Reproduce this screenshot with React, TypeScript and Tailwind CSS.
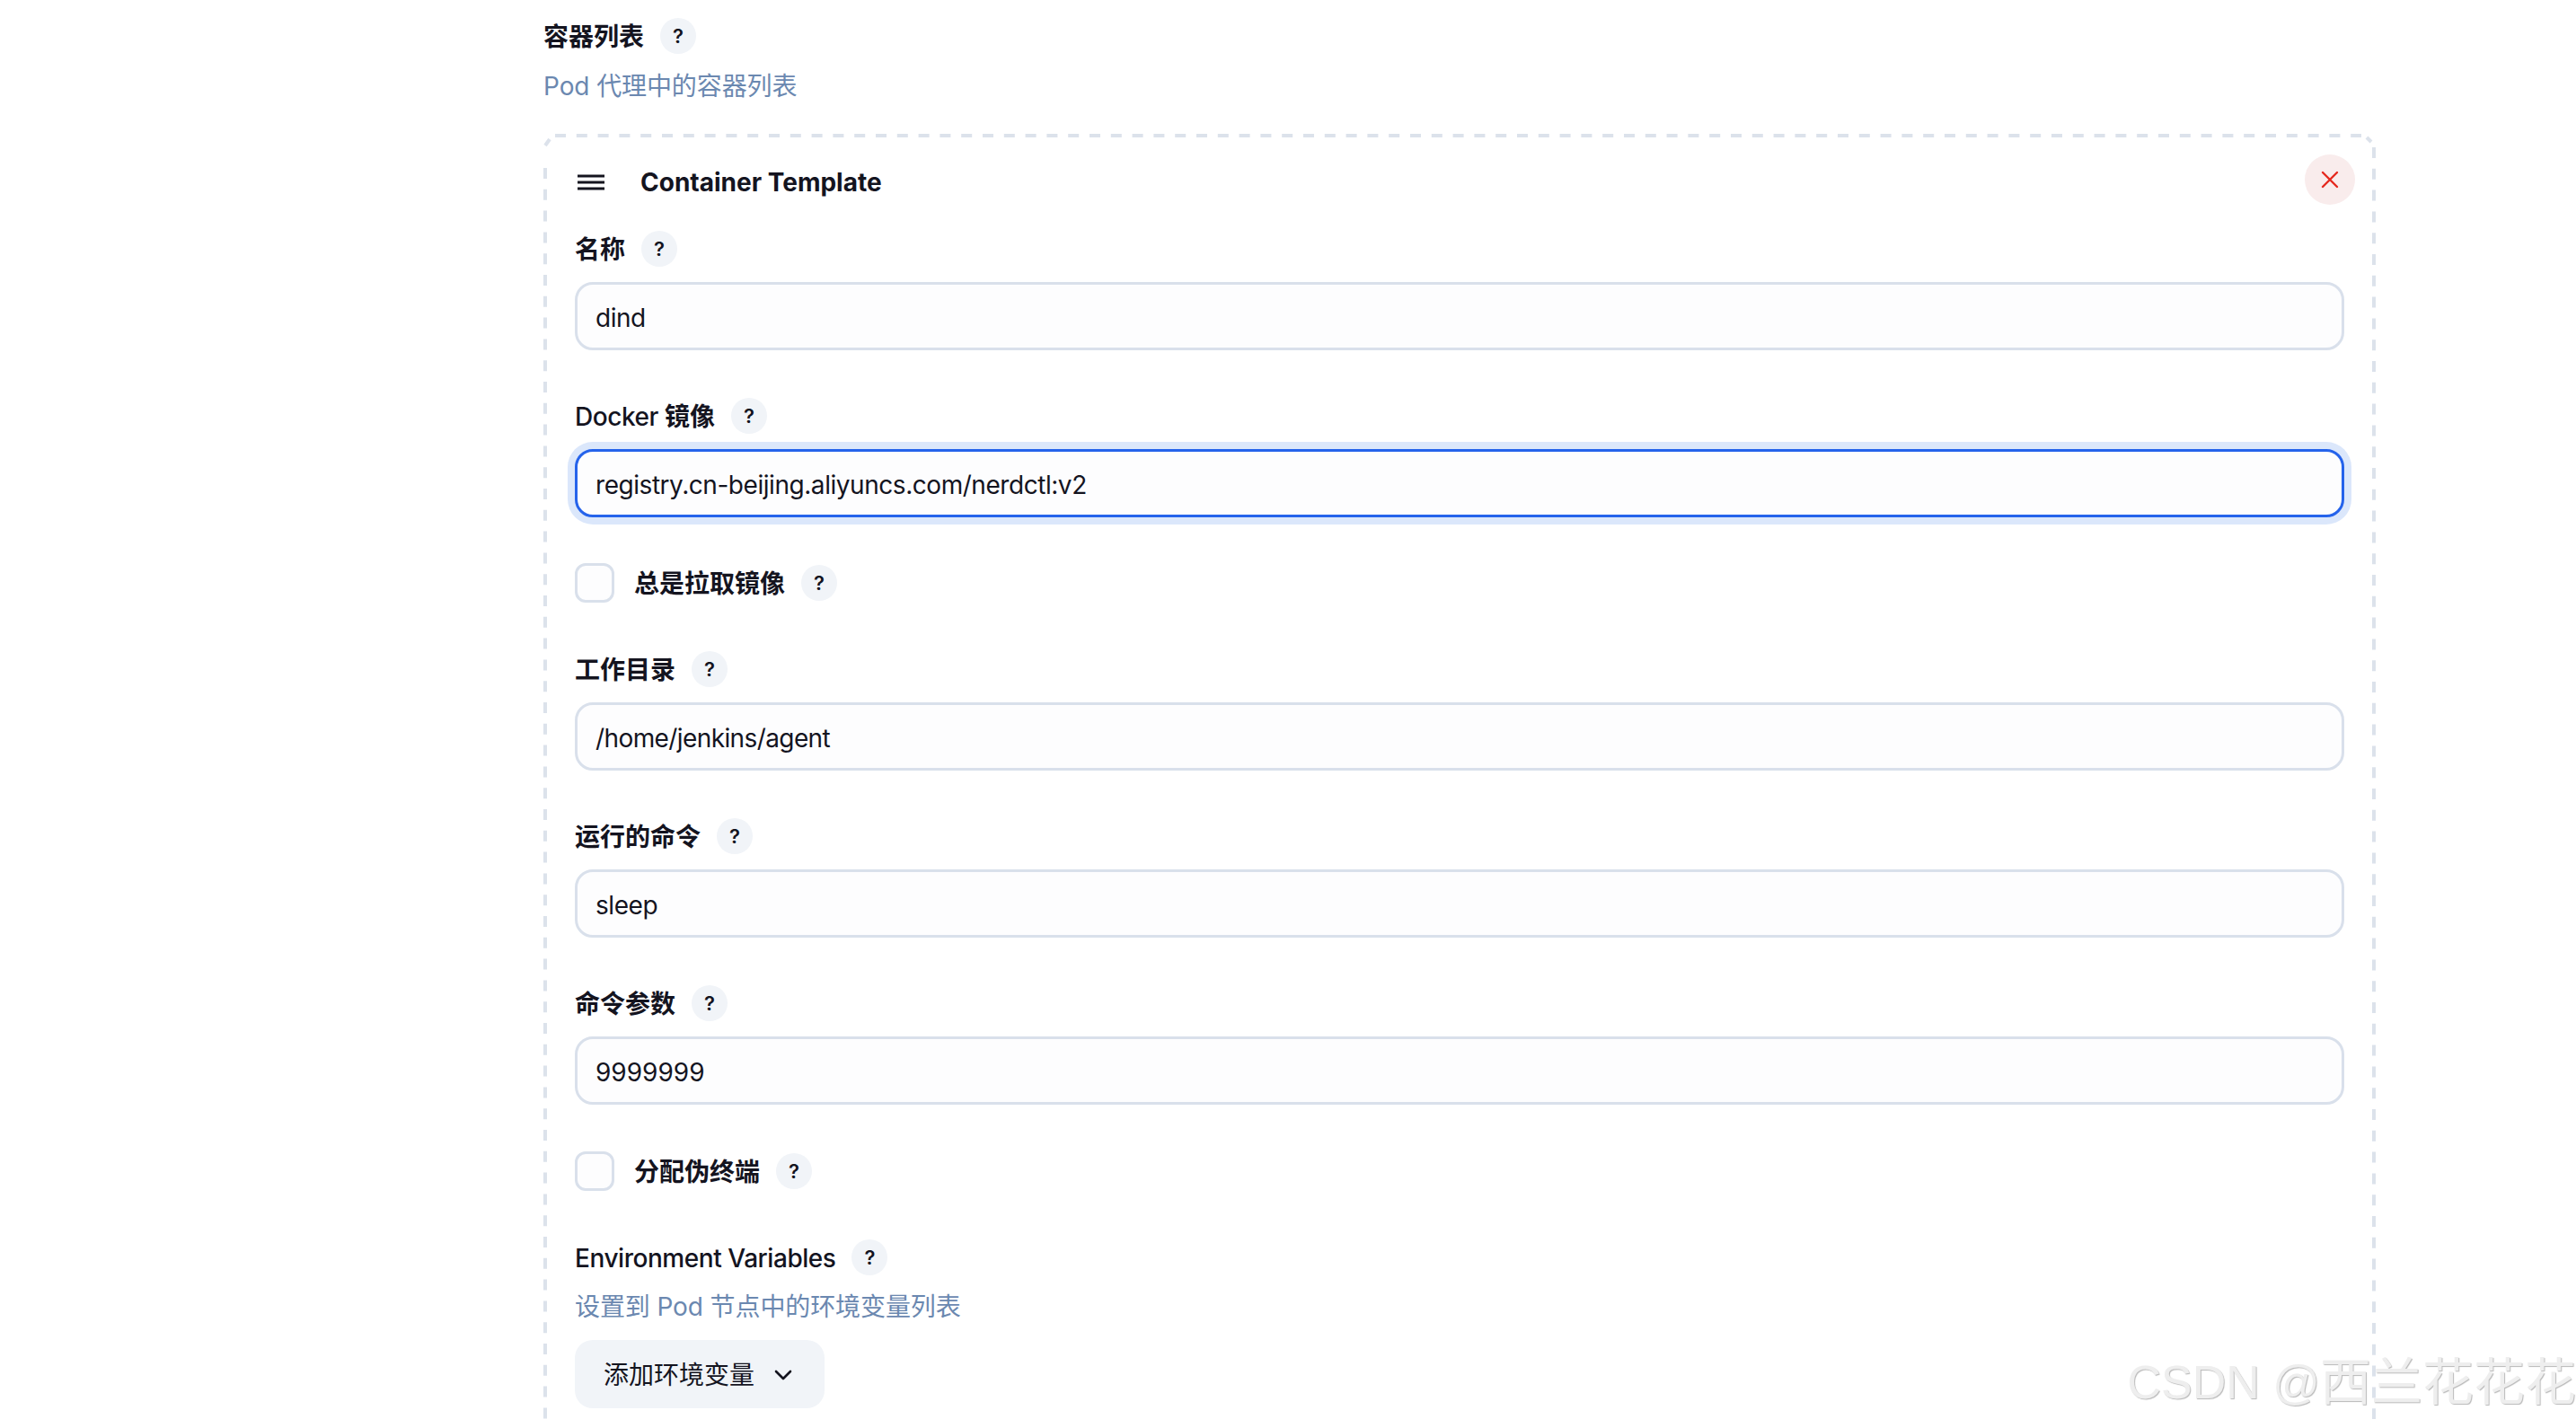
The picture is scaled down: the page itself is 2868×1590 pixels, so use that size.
import React from "react";

const FONT = "font-['Inter','Noto_Sans_CJK_SC',sans-serif]";

function Help() {
  return (
    <span className="ml-[18px] flex h-[40px] w-[40px] shrink-0 items-center justify-center rounded-full bg-[#f1f4f8] text-[22px] font-semibold text-[#14141f]">
      ?
    </span>
  );
}

function Label({ children }: { children: React.ReactNode }) {
  return (
    <div className="flex h-[40px] items-center">
      <span className="pt-[2px] text-[28px] font-semibold leading-[40px] text-[#14141f]">{children}</span>
      <Help />
    </div>
  );
}

function Latin({ children }: { children: React.ReactNode }) {
  return <span className="font-medium tracking-[-0.45px]">{children}</span>;
}

function TextField({
  label,
  value,
  focused,
  bottom = "mb-[53px]",
  tracking = "tracking-[-0.45px]",
}: {
  label: React.ReactNode;
  value: string;
  focused?: boolean;
  bottom?: string;
  tracking?: string;
}) {
  return (
    <div className={bottom}>
      <Label>{label}</Label>
      <input
        readOnly
        value={value}
        className={`mt-[17px] block h-[76px] w-full rounded-[20px] border-[3px] bg-[#fdfdfe] px-[20px] pt-[3px] text-[28px] text-[#14141f] outline-none ${tracking} ${
          focused ? "border-[#2563eb] shadow-[0_0_0_8px_#dbe7fb]" : "border-[#d9e0eb]"
        }`}
      />
    </div>
  );
}

function CheckField({ label }: { label: string }) {
  return (
    <div className="mb-[56px] flex h-[40px] items-center">
      <span className="mr-[22px] h-[44px] w-[44px] shrink-0 rounded-[12px] border-[3px] border-[#d9e0eb] bg-[#fdfdfe]" />
      <Label>{label}</Label>
    </div>
  );
}

function DashedOutline() {
  const stroke = { stroke: "#dce2eb", strokeWidth: 4, fill: "none", strokeDasharray: "12 11.8" };
  return (
    <svg className="pointer-events-none absolute left-0 top-0 overflow-visible" width="2040" height="1500" aria-hidden="true">
      <path d="M13 2 H2024" style={stroke} />
      <path d="M2 38 V1500" style={stroke} />
      <path d="M2038 15 V1500" style={stroke} />
      <path d="M2 13 L7 6" stroke="#dce2eb" strokeWidth="4" fill="none" />
      <path d="M2030 4 L2035 9" stroke="#dce2eb" strokeWidth="4" fill="none" />
    </svg>
  );
}

export default function App() {
  return (
    <div className={`relative h-[1590px] w-full overflow-hidden bg-white ${FONT}`}>
      <div className="h-[1580px] overflow-hidden pl-[605px] pt-[20px]">
        <div className="w-[2040px]">
          <Label>容器列表</Label>
          <p className="mt-[16px] h-[40px] text-[28px] leading-[40px] tracking-[-0.1px] text-[#6b88b0]">Pod 代理中的容器列表</p>

          <section className="relative mt-[33px] h-[1500px] px-[35px] pt-[34px]">
            <DashedOutline />
            <button className="absolute right-[23px] top-[23px] flex h-[56px] w-[56px] items-center justify-center rounded-full bg-[#f9ecec]">
              <svg width="20" height="20" viewBox="0 0 20 20" fill="none" stroke="#e5281e" strokeWidth="2.4" strokeLinecap="round">
                <path d="M2 2 L18 18 M18 2 L2 18" />
              </svg>
            </button>

            <div className="flex h-[40px] items-center pl-[3px]">
              <svg width="30" height="18" viewBox="0 0 30 18" fill="none" stroke="#14141f" strokeWidth="2.8" className="mr-[40px] shrink-0">
                <path d="M0 2 H30 M0 9 H30 M0 16 H30" />
              </svg>
              <span className="text-[28px] font-bold leading-[40px] text-[#14141f]">Container Template</span>
            </div>

            <div className="mt-[34px]">
              <TextField label="名称" value="dind" />
              <TextField label={<><Latin>Docker</Latin> 镜像</>} value="registry.cn-beijing.aliyuncs.com/nerdctl:v2" focused />
              <CheckField label="总是拉取镜像" />
              <TextField label="工作目录" value="/home/jenkins/agent" tracking="tracking-[-0.6px]" />
              <TextField label="运行的命令" value="sleep" />
              <TextField label="命令参数" value="9999999" bottom="mb-[54px]" tracking="tracking-[0px]" />
              <CheckField label="分配伪终端" />
              <Label><Latin>Environment Variables</Latin></Label>
              <p className="mt-[15px] h-[40px] text-[28px] leading-[40px] tracking-[-0.1px] text-[#6b88b0]">设置到 Pod 节点中的环境变量列表</p>
              <button className="mt-[17px] flex h-[76px] w-[278px] items-center rounded-[20px] bg-[#f1f4f8] pl-[32px] pt-[2px] text-[28px] font-normal text-[#14141f]">
                添加环境变量
                <svg width="20" height="12" viewBox="0 0 20 12" fill="none" stroke="#14141f" strokeWidth="2.6" strokeLinecap="round" strokeLinejoin="round" className="ml-[22px]">
                  <path d="M2 2 L10 10 L18 2" />
                </svg>
              </button>
            </div>
          </section>
        </div>
      </div>

      <div className="pointer-events-none absolute bottom-[19px] right-0 flex items-center whitespace-nowrap font-['Liberation_Sans','Noto_Sans_CJK_SC',sans-serif] leading-[64px] text-[#eeeeee] [text-shadow:1px_1px_1px_#b8b8b8]">
        <span className="whitespace-pre text-[52px]">CSDN @</span>
        <span className="text-[57px]">西兰花花花</span>
      </div>
    </div>
  );
}
